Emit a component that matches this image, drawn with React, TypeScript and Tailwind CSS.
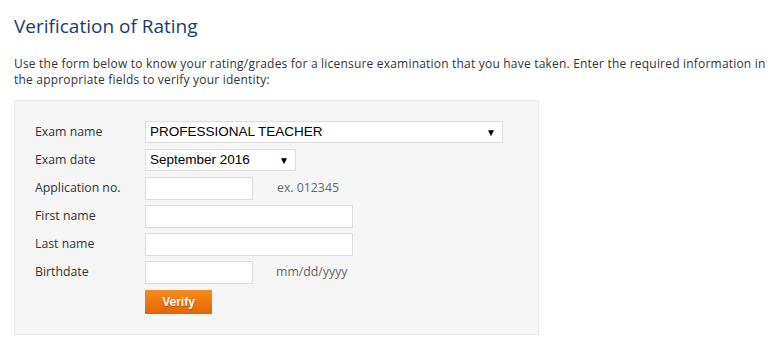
const Row = ({ label, children }: { label: string; children: React.ReactNode }) => (
  <div className="flex items-center h-[28px]">
    <div className="w-[110px] text-[12.3px] text-[#333]">{label}</div>
    {children}
  </div>
);

const Select = ({ value, width }: { value: string; width: string }) => (
  <div
    className={`${width} h-[22px] bg-white border border-[#dcdcdc] flex items-center justify-between pl-[4px] pr-[6px] text-[13.5px] text-black`}
    style={{ fontFamily: '"Liberation Sans", Arial, sans-serif' }}
  >
    <span>{value}</span>
    <span className="text-[10px]">▼</span>
  </div>
);

const Input = ({ width }: { width: string }) => (
  <div className={`${width} h-[23px] bg-white border border-[#dcdcdc]`} />
);

export default function App() {
  return (
    <div
      className="w-[777px] h-[345px] bg-white px-[14px] pt-[12px]"
      style={{ fontFamily: '"Open Sans", "Noto Sans", sans-serif' }}
    >
      <h1 className="text-[19px] text-[#1e3c64] leading-[28px]">Verification of Rating</h1>
      <p className="mt-[16px] text-[12px] leading-[16px] tracking-[0.2px] text-[#333] w-[752px]">
        Use the form below to know your rating/grades for a licensure examination that you have taken. Enter the
        required information in the appropriate fields to verify your identity:
      </p>
      <div className="mt-[12px] w-[525px] h-[235px] bg-[#f6f6f6] border border-[#e6e6e6] pl-[20px] pt-[17px]">
        <Row label="Exam name">
          <Select value="PROFESSIONAL TEACHER" width="w-[358px]" />
        </Row>
        <Row label="Exam date">
          <Select value="September 2016" width="w-[151px]" />
        </Row>
        <Row label="Application no.">
          <Input width="w-[108px]" />
          <span className="ml-[24px] text-[12.3px] text-[#666]">ex. 012345</span>
        </Row>
        <Row label="First name">
          <Input width="w-[208px]" />
        </Row>
        <Row label="Last name">
          <Input width="w-[208px]" />
        </Row>
        <Row label="Birthdate">
          <Input width="w-[108px]" />
          <span className="ml-[23px] text-[12.3px] text-[#666]">mm/dd/yyyy</span>
        </Row>
        <div className="pl-[110px] mt-[2px]">
          <button
            className="w-[67px] h-[24px] bg-gradient-to-b from-[#f68a1e] to-[#e56500] text-white text-[12px] font-bold"
            style={{ fontFamily: '"Liberation Sans", Arial, sans-serif', textShadow: '0 1px 1px rgba(0,0,0,0.35)' }}
          >
            Verify
          </button>
        </div>
      </div>
    </div>
  );
}
